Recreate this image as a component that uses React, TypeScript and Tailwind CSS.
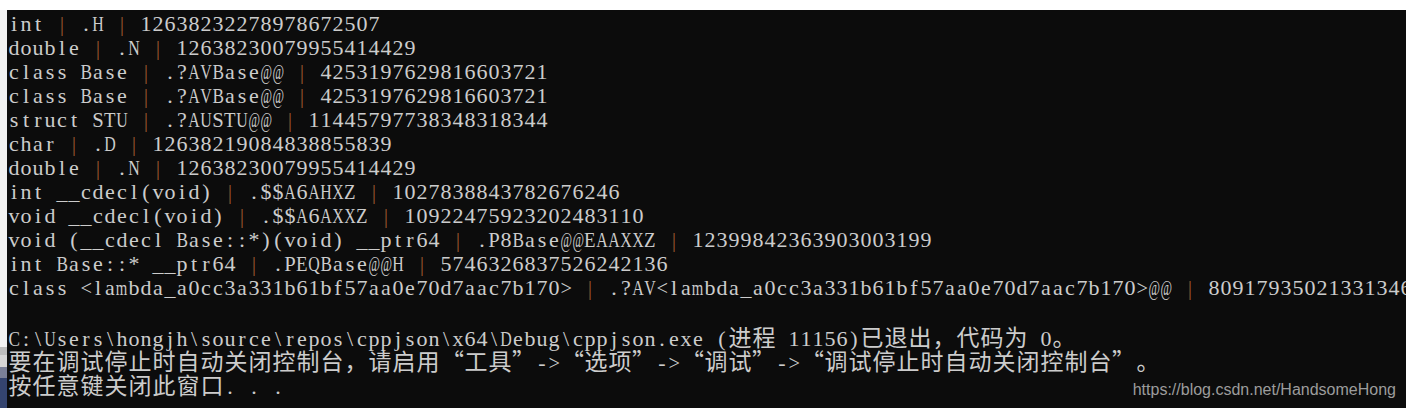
import React from "react";

const LINES: string[] = [
  "int | .H | 12638232278978672507",
  "double | .N | 12638230079955414429",
  "class Base | .?AVBase@@ | 4253197629816603721",
  "class Base | .?AVBase@@ | 4253197629816603721",
  "struct STU | .?AUSTU@@ | 11445797738348318344",
  "char | .D | 12638219084838855839",
  "double | .N | 12638230079955414429",
  "int __cdecl(void) | .$$A6AHXZ | 1027838843782676246",
  "void __cdecl(void) | .$$A6AXXZ | 10922475923202483110",
  "void (__cdecl Base::*)(void) __ptr64 | .P8Base@@EAAXXZ | 12399842363903003199",
  "int Base::* __ptr64 | .PEQBase@@H | 5746326837526242136",
  "class <lambda_a0cc3a331b61bf57aa0e70d7aac7b170> | .?AV<lambda_a0cc3a331b61bf57aa0e70d7aac7b170>@@ | 8091793502133134612",
  "",
  "C:\\Users\\hongjh\\source\\repos\\cppjson\\x64\\Debug\\cppjson.exe (进程 11156)已退出，代码为 0。",
  "要在调试停止时自动关闭控制台，请启用“工具”->“选项”->“调试”->“调试停止时自动关闭控制台”。",
  "按任意键关闭此窗口. . .",
];

const widthCache: Record<string, number> = {};
let ctx: CanvasRenderingContext2D | null = null;

function glyphScale(ch: string): number {
  if (widthCache[ch] === undefined) {
    if (!ctx) {
      ctx = document.createElement("canvas").getContext("2d");
    }
    let w = 10;
    if (ctx) {
      ctx.font = "22px 'Liberation Serif'";
      w = ctx.measureText(ch).width;
    }
    widthCache[ch] = w;
  }
  const w = widthCache[ch];
  return w > 11.5 ? 11.5 / w : 1;
}

function isWide(ch: string) {
  return ch.charCodeAt(0) > 0x2000;
}

function WideCell({ ch }: { ch: string }) {
  const justify =
    ch === "“" ? "justify-end" : ch === "”" ? "justify-start" : "justify-center";
  return (
    <span
      className={`inline-flex w-[24px] ${justify} font-['Noto_Sans_CJK_SC',sans-serif] text-[23px]`}
    >
      <span>{ch}</span>
    </span>
  );
}

function NarrowCell({ ch }: { ch: string }) {
  if (ch === " ") return <span className="inline-block w-[12px]" />;
  const s = glyphScale(ch);
  const color = ch === "|" ? "text-[#97522c]" : "";
  return (
    <span className={`inline-flex w-[12px] justify-center ${color}`}>
      <span
        className="inline-block"
        style={s < 1 ? { transform: `scaleX(${s})` } : undefined}
      >
        {ch}
      </span>
    </span>
  );
}

function Line({ text }: { text: string }) {
  return (
    <div className="h-[24px] whitespace-pre">
      {Array.from(text).map((ch, i) =>
        isWide(ch) ? <WideCell key={i} ch={ch} /> : <NarrowCell key={i} ch={ch} />
      )}
    </div>
  );
}

export default function App() {
  return (
    <div className="flex h-[408px] w-[1406px] flex-col overflow-hidden bg-white">
      <div className="h-[10px] shrink-0 bg-white" />
      <div className="flex min-h-0 flex-1">
        <div className="flex w-[7px] shrink-0 flex-col">
          <div className="flex-1 bg-[#f2f2f2]" />
          <div className="h-[8px] bg-[#bdbdbd]" />
          <div className="h-[12px] bg-[#d6d6d6]" />
          <div className="h-[11px] bg-[#7a8098]" />
          <div className="h-[30px] bg-[#34446f]" />
        </div>
        <div className="relative min-w-0 flex-1 overflow-hidden bg-[#0c0c0c] pl-[1px] pt-[2px]">
          <div className="w-max font-['Liberation_Serif',serif] text-[22px] leading-[24px] text-[#cccccc]">
            {LINES.map((l, i) => (
              <Line key={i} text={l} />
            ))}
          </div>
          <div className="absolute bottom-[10px] right-[10px] font-['Liberation_Sans',Arial,sans-serif] text-[16px] leading-[16px] text-[#9c9c9c]">
            https://blog.csdn.net/HandsomeHong
          </div>
        </div>
      </div>
    </div>
  );
}
